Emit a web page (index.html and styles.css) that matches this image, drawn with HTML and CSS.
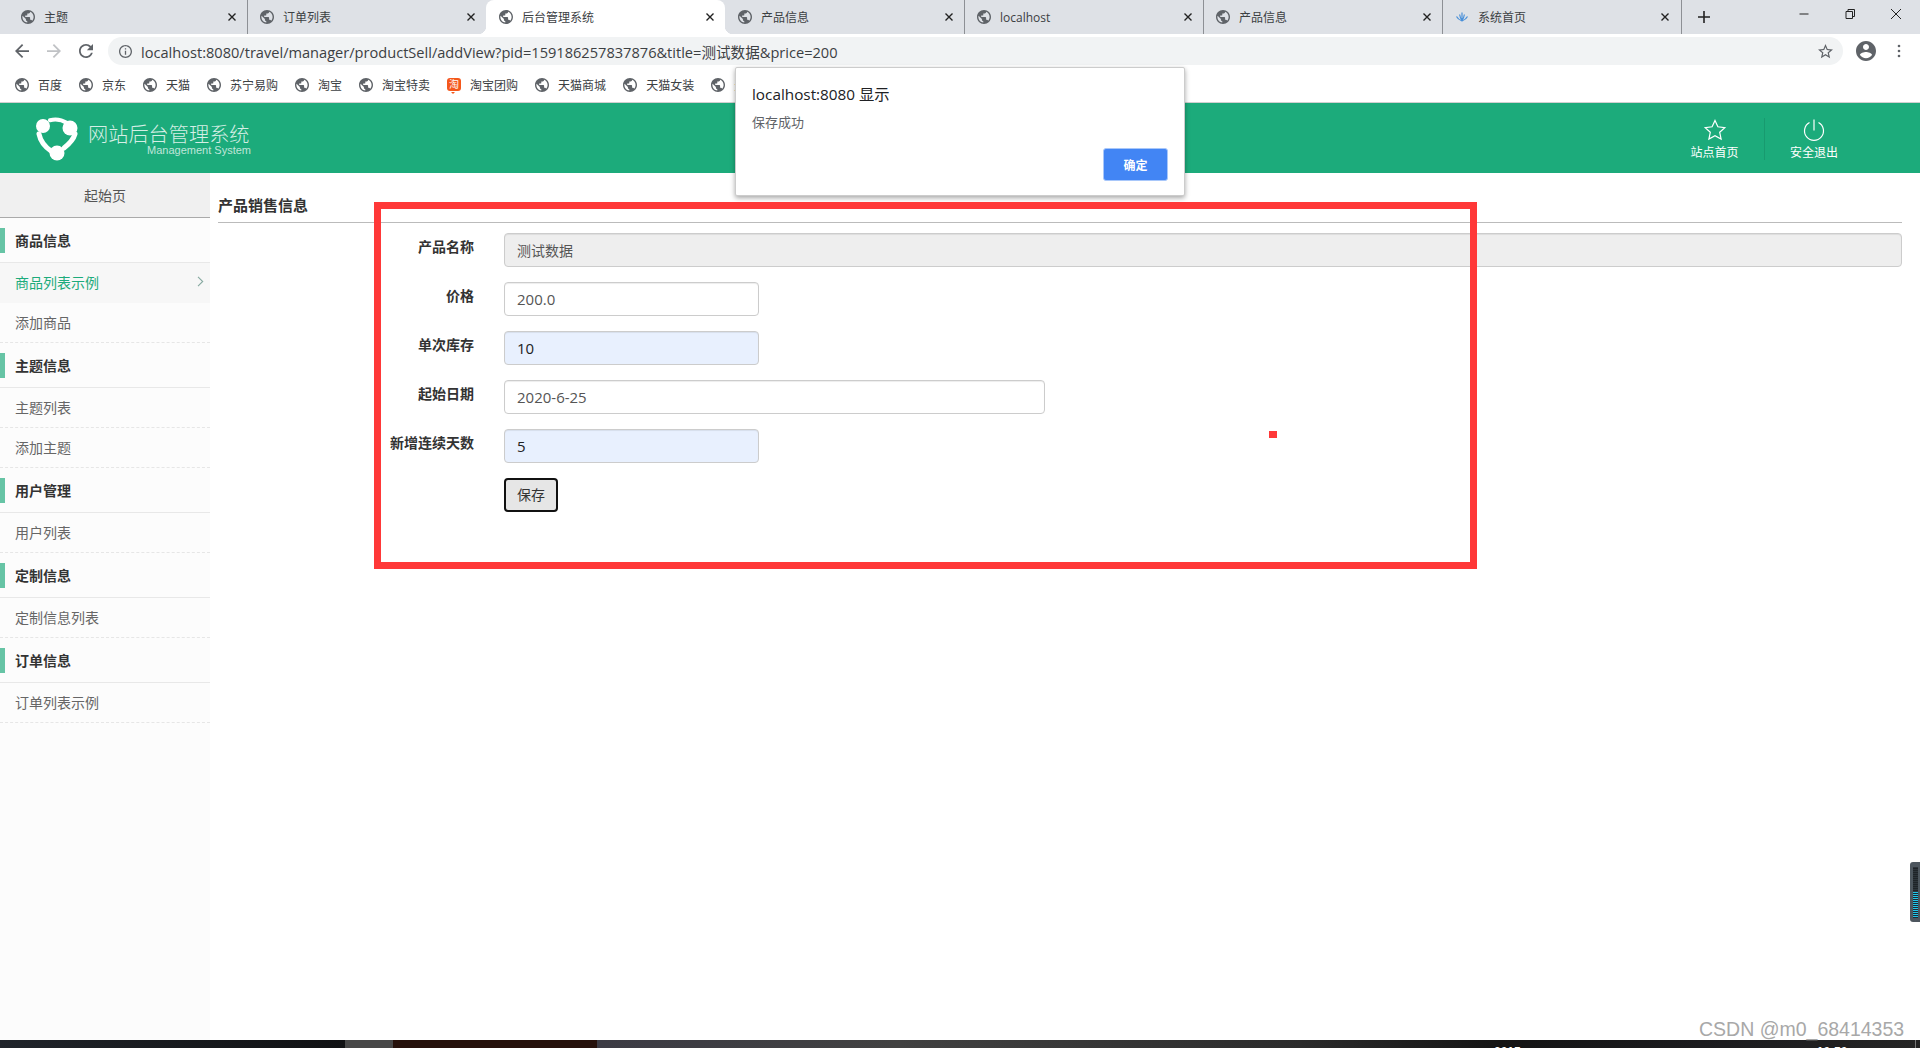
FILE: index.html
```html
<!DOCTYPE html>
<html lang="zh-CN">
<head>
<meta charset="utf-8">
<title>后台管理系统</title>
<link rel="stylesheet" href="styles.css">
</head>
<body>
<svg class="sprite" width="0" height="0" aria-hidden="true">
  <symbol id="globe" viewBox="2 2 20 20"><path d="M12 2C6.48 2 2 6.48 2 12s4.48 10 10 10 10-4.48 10-10S17.52 2 12 2zm-1 17.93c-3.95-.49-7-3.85-7-7.93 0-.62.08-1.21.21-1.79L9 15v1c0 1.1.9 2 2 2v1.93zm6.9-2.54c-.26-.81-1-1.39-1.9-1.39h-1v-3c0-.55-.45-1-1-1H8v-2h2c.55 0 1-.45 1-1V7h2c1.1 0 2-.9 2-2v-.41c2.93 1.19 5 4.06 5 7.41 0 2.08-.8 3.97-2.1 5.39z"/></symbol>
  <symbol id="close" viewBox="0 0 10 10"><path d="M1.5 1.5l7 7M8.5 1.5l-7 7" fill="none" stroke="currentColor" stroke-width="1.4"/></symbol>
  <symbol id="arrow" viewBox="4 4 16 16"><path d="M20 11H7.83l5.59-5.59L12 4l-8 8 8 8 1.41-1.41L7.83 13H20v-2z"/></symbol>
</svg>

<div class="tabstrip">
  <div class="tab tab-plain"><svg class="tab-icon"><use href="#globe"/></svg><span class="tab-title">主题</span><svg class="tab-close"><use href="#close"/></svg></div>
  <div class="tab"><svg class="tab-icon"><use href="#globe"/></svg><span class="tab-title">订单列表</span><svg class="tab-close"><use href="#close"/></svg></div>
  <div class="tab tab-plain tab-active"><svg class="tab-icon"><use href="#globe"/></svg><span class="tab-title">后台管理系统</span><svg class="tab-close"><use href="#close"/></svg></div>
  <div class="tab tab-plain"><svg class="tab-icon"><use href="#globe"/></svg><span class="tab-title">产品信息</span><svg class="tab-close"><use href="#close"/></svg></div>
  <div class="tab"><svg class="tab-icon"><use href="#globe"/></svg><span class="tab-title">localhost</span><svg class="tab-close"><use href="#close"/></svg></div>
  <div class="tab"><svg class="tab-icon"><use href="#globe"/></svg><span class="tab-title">产品信息</span><svg class="tab-close"><use href="#close"/></svg></div>
  <div class="tab tab-last">
    <svg class="tab-icon" viewBox="0 0 14 14"><path d="M7 2.5v8M7 10.5C5.5 8.5 5 7 4.6 4.5M7 10.5c1.5-2 2-3.500 2.400-6M7 11C4.500 10 2.500 8.500 1.500 6.500M7 11c2.500-1 4.500-2.500 5.500-4.500" fill="none" stroke="#4a90d9" stroke-width="1.200"/></svg>
    <span class="tab-title">系统首页</span><svg class="tab-close"><use href="#close"/></svg>
  </div>
  <svg class="new-tab" viewBox="0 0 12 12"><path d="M6 0v12M0 6h12" fill="none" stroke="#222" stroke-width="1.600"/></svg>
  <div class="win-controls">
    <svg class="win-btn" viewBox="0 0 12 12"><path d="M1.500 6h9" stroke="#222" fill="none"/></svg>
    <svg class="win-btn" viewBox="0 0 12 12"><path d="M2 3.500h6.500v7H2zM4 3.500V1.500h6.500v7H8.500" stroke="#222" fill="none"/></svg>
    <svg class="win-btn" viewBox="0 0 12 12"><path d="M1 1l10 10M11 1L1 11" stroke="#222" fill="none"/></svg>
  </div>
</div>

<div class="toolbar">
  <svg class="nav-icon"><use href="#arrow"/></svg>
  <svg class="nav-icon nav-disabled nav-flip"><use href="#arrow"/></svg>
  <svg class="nav-icon" viewBox="4 4 16 16"><path d="M17.650 6.350C16.200 4.900 14.210 4 12 4c-4.420 0-7.990 3.580-7.990 8s3.570 8 7.990 8c3.730 0 6.840-2.550 7.730-6h-2.080c-.82 2.330-3.040 4-5.650 4-3.310 0-6-2.690-6-6s2.690-6 6-6c1.660 0 3.140.69 4.220 1.780L13 11h7V4l-2.350 2.350z"/></svg>
  <div class="omnibox">
    <svg class="omni-info" viewBox="2 2 20 20"><path d="M11 7h2v2h-2zm0 4h2v6h-2zm1-9C6.480 2 2 6.480 2 12s4.480 10 10 10 10-4.480 10-10S17.520 2 12 2zm0 18c-4.410 0-8-3.590-8-8s3.590-8 8-8 8 3.590 8 8-3.590 8-8 8z"/></svg>
    <span class="omni-url">localhost:8080/travel/manager/productSell/addView?pid=159186257837876&amp;title=测试数据&amp;price=200</span>
    <svg class="omni-star" viewBox="2 2 20 20"><path d="M22 9.240l-7.190-.62L12 2 9.190 8.630 2 9.240l5.460 4.730L5.820 21 12 17.270 18.180 21l-1.630-7.030L22 9.240zM12 15.400l-3.760 2.270 1-4.280-3.320-2.880 4.380-.38L12 6.100l1.710 4.040 4.380.38-3.320 2.880 1 4.280L12 15.400z"/></svg>
  </div>
  <svg class="profile" viewBox="2 2 20 20"><path d="M12 2C6.480 2 2 6.480 2 12s4.480 10 10 10 10-4.480 10-10S17.520 2 12 2zm0 3c1.660 0 3 1.340 3 3s-1.340 3-3 3-3-1.340-3-3 1.340-3 3-3zm0 14.200c-2.500 0-4.710-1.280-6-3.220.03-1.990 4-3.080 6-3.080 1.990 0 5.970 1.090 6 3.080-1.290 1.940-3.500 3.220-6 3.220z"/></svg>
  <svg class="menu-dots" viewBox="0 0 4 14"><circle cx="2" cy="2" r="1.300"/><circle cx="2" cy="7" r="1.300"/><circle cx="2" cy="12" r="1.300"/></svg>
</div>

<div class="bookmarks">
  <div class="bm"><svg class="bm-icon"><use href="#globe"/></svg>百度</div>
  <div class="bm"><svg class="bm-icon"><use href="#globe"/></svg>京东</div>
  <div class="bm"><svg class="bm-icon"><use href="#globe"/></svg>天猫</div>
  <div class="bm"><svg class="bm-icon"><use href="#globe"/></svg>苏宁易购</div>
  <div class="bm"><svg class="bm-icon"><use href="#globe"/></svg>淘宝</div>
  <div class="bm"><svg class="bm-icon"><use href="#globe"/></svg>淘宝特卖</div>
  <div class="bm"><span class="bm-tao">淘</span>淘宝团购</div>
  <div class="bm"><svg class="bm-icon"><use href="#globe"/></svg>天猫商城</div>
  <div class="bm"><svg class="bm-icon"><use href="#globe"/></svg>天猫女装</div>
  <div class="bm"><svg class="bm-icon"><use href="#globe"/></svg>天猫超市</div>
</div>

<header class="site-header">
  <div class="brand">
    <svg class="brand-logo" viewBox="0 0 44 44">
      <g fill="none" stroke="#fff" stroke-linecap="round">
        <path d="M14 3.200Q23 1 31 6" stroke-width="4"/>
        <path d="M3 17Q5 27 15 34" stroke-width="5"/>
        <path d="M39 17Q37 24 28 31" stroke-width="5"/>
      </g>
      <g fill="#fff"><circle cx="7" cy="9" r="7"/><circle cx="34" cy="11" r="7.500"/><circle cx="21" cy="36" r="7.500"/></g>
    </svg>
    <div class="brand-text">
      <div class="brand-title">网站后台管理系统</div>
      <div class="brand-sub">Management System</div>
    </div>
  </div>
  <nav class="header-links">
    <a class="header-link">
      <svg class="header-icon" viewBox="0 0 24 24"><path d="M12 2.500l2.900 6.300 6.900.8-5.100 4.700 1.400 6.800-6.100-3.400-6.100 3.400 1.400-6.800-5.100-4.700 6.900-.8z" fill="none" stroke="#fff" stroke-width="1.200"/></svg>
      <span>站点首页</span>
    </a>
    <a class="header-link header-link-sep">
      <svg class="header-icon" viewBox="0 0 24 24"><path d="M12 1.500v11M7.500 4.500a9.500 9.500 0 1 0 9 0" fill="none" stroke="#fff" stroke-width="1.200"/></svg>
      <span>安全退出</span>
    </a>
  </nav>
</header>

<div class="workspace">
  <aside class="sidebar">
    <div class="side-start">起始页</div>
    <div class="side-head"><i class="side-bar"></i>商品信息</div>
    <div class="side-item side-item-active">商品列表示例<svg class="side-chevron" viewBox="0 0 7 11"><path d="M1 .8l4.700 4.700L1 10.200" fill="none" stroke="#86a9a0" stroke-width="1.100"/></svg></div>
    <div class="side-item">添加商品</div>
    <div class="side-head"><i class="side-bar"></i>主题信息</div>
    <div class="side-item">主题列表</div>
    <div class="side-item">添加主题</div>
    <div class="side-head"><i class="side-bar"></i>用户管理</div>
    <div class="side-item">用户列表</div>
    <div class="side-head"><i class="side-bar"></i>定制信息</div>
    <div class="side-item">定制信息列表</div>
    <div class="side-head"><i class="side-bar"></i>订单信息</div>
    <div class="side-item">订单列表示例</div>
  </aside>

  <main class="content">
    <h2 class="page-title">产品销售信息</h2>
    <form class="form">
      <label class="form-label">产品名称</label>
      <input class="field field-disabled" type="text" value="测试数据" disabled>
      <label class="form-label">价格</label>
      <input class="field field-sm" type="text" value="200.0">
      <label class="form-label">单次库存</label>
      <input class="field field-sm field-auto" type="text" value="10">
      <label class="form-label">起始日期</label>
      <input class="field field-md" type="text" value="2020-6-25">
      <label class="form-label">新增连续天数</label>
      <input class="field field-sm field-auto" type="text" value="5">
      <span></span>
      <button class="save-btn" type="button">保存</button>
    </form>
  </main>
</div>

<footer class="taskbar"><span class="task-year">2015</span><span class="task-time">10:50</span></footer>

<div class="alert-dialog">
  <div class="alert-title">localhost:8080 显示</div>
  <div class="alert-msg">保存成功</div>
  <div class="alert-actions"><button class="alert-ok" type="button">确定</button></div>
</div>
<div class="mark-box"></div>
<div class="mark-dot"></div>
<div class="volume"><div class="volume-track"></div></div>
<div class="watermark">CSDN @m0_68414353</div>
</body>
</html>
```
FILE: styles.css
```css
* { box-sizing: border-box; }
html, body { margin: 0; padding: 0; }
body {
  position: relative;
  width: 1920px;
  height: 1048px;
  overflow: hidden;
  display: flex;
  flex-direction: column;
  background: #fff;
  color: #333;
  font-family: "Open Sans", "Noto Sans CJK SC", sans-serif;
  font-size: 14px;
}
.sprite { position: absolute; }
svg { flex: none; display: block; }

/* tab strip */
.tabstrip {
  flex: none;
  height: 34px;
  display: flex;
  padding-left: 8px;
  background: #dee1e6;
  color: #3c4043;
  font-size: 12px;
}
.tab {
  position: relative;
  flex: none;
  width: 239px;
  display: flex;
  align-items: center;
  padding: 0 10px 0 12px;
  border-left: 1px solid #8d9095;
  background-clip: padding-box;
}
.tab-plain { border-left-color: transparent; }
.tab-last { width: 240px; padding-right: 11px; border-right: 1px solid #8d9095; }
.tab-active {
  background: #fff;
  background-clip: border-box;
  border-radius: 8px 8px 0 0;
}
.tab-active::before, .tab-active::after {
  content: "";
  position: absolute;
  bottom: 0;
  width: 8px;
  height: 8px;
}
.tab-active::before { left: -9px; background: radial-gradient(circle at 0 0, transparent 8px, #fff 8.500px); }
.tab-active::after { right: -8px; background: radial-gradient(circle at 100% 0, transparent 8px, #fff 8.500px); }
.tab-icon { width: 14px; height: 14px; fill: #5f6368; margin-right: 9px; }
.tab-title { flex: 1; white-space: nowrap; }
.tab-close { width: 10px; height: 10px; color: #222; }
.new-tab { width: 12px; height: 12px; margin: 11px 0 0 16px; }
.win-controls { display: flex; gap: 34px; margin: 8px 18px 0 auto; }
.win-btn { width: 12px; height: 12px; }

/* toolbar */
.toolbar {
  flex: none;
  height: 34px;
  display: flex;
  align-items: center;
  padding: 0 0 0 15px;
  background: #fff;
}
.nav-icon { width: 14px; height: 14px; margin-right: 18px; fill: #5f6368; }
.nav-disabled { fill: #c0c2c5; }
.nav-flip { transform: scaleX(-1); }
.omnibox {
  flex: none;
  width: 1735px;
  height: 28px;
  margin-left: -3px;
  display: flex;
  align-items: center;
  padding: 0 10px 0 11px;
  border-radius: 14px;
  background: #f1f3f4;
}
.omni-info { width: 13px; height: 13px; fill: #5f6368; margin-right: 9px; }
.omni-url { flex: 1; font-size: 14.600px; color: #3c4043; white-space: nowrap; }
.omni-star { width: 15px; height: 15px; fill: #5f6368; }
.profile { width: 20px; height: 20px; fill: #5f6368; margin-left: 13px; }
.menu-dots { width: 4px; height: 14px; fill: #5f6368; margin-left: 21px; }

/* bookmarks */
.bookmarks {
  flex: none;
  height: 35px;
  display: flex;
  align-items: center;
  padding-left: 15px;
  background: #fff;
  border-bottom: 1px solid #d0d0d0;
  color: #3c4043;
  font-size: 12px;
}
.bm { flex: none; display: flex; align-items: center; margin-right: 17px; white-space: nowrap; }
.bm-icon { width: 14px; height: 14px; fill: #5f6368; margin-right: 9px; }
.bm-tao {
  position: relative;
  flex: none;
  width: 14px;
  height: 13px;
  margin: -2px 9px 0 0;
  border-radius: 3px;
  background: #f4581c;
  color: #fff;
  font-size: 10px;
  line-height: 13px;
  text-align: center;
}
.bm-tao::after {
  content: "";
  position: absolute;
  left: 4px;
  bottom: -3px;
  border: 2px solid transparent;
  border-top-color: #f4581c;
  border-bottom-width: 0;
}

/* site header */
.site-header {
  flex: none;
  height: 70px;
  display: flex;
  align-items: center;
  justify-content: space-between;
  padding-left: 36px;
  background: #1cab7b;
  color: #fff;
}
.brand { display: flex; align-items: center; gap: 8px; }
.brand-logo { width: 44px; height: 44px; margin-top: 1px; }
.brand-text { display: flex; flex-direction: column; width: 163px; margin-top: 1px; }
.brand-title { font-size: 20.200px; line-height: 26px; color: rgba(255,255,255,.82); font-weight: 300; white-space: nowrap; }
.brand-sub { font-family: "Liberation Sans", sans-serif; font-size: 11px; line-height: 12px; margin-top: -3px; text-align: right; color: rgba(255,255,255,.72); white-space: nowrap; }
.header-links { display: flex; align-items: center; padding-right: 57px; }
.header-link { width: 99px; height: 42px; display: flex; flex-direction: column; align-items: center; font-size: 12px; line-height: 16px; margin-top: 2px; }
.header-link-sep { border-left: 1px solid #189a6f; }
.header-link span { margin-top: 3px; white-space: nowrap; }
.header-icon { width: 24px; height: 24px; }

/* workspace */
.workspace { flex: 1; min-height: 0; display: flex; }
.sidebar { flex: none; width: 210px; background: #fcfcfc; }
.side-start {
  height: 45px;
  display: flex;
  align-items: center;
  justify-content: center;
  background: #f0f0f0;
  border-bottom: 1px solid #aaa;
  color: #555;
}
.side-head {
  height: 45px;
  display: flex;
  align-items: center;
  border-bottom: 1px solid #e8e8e8;
  font-weight: 700;
  color: #333;
}
.side-bar { flex: none; width: 5px; height: 25px; margin-right: 10px; background: #66c4a5; }
.side-item {
  height: 40px;
  display: flex;
  align-items: center;
  justify-content: space-between;
  padding: 0 6px 2px 15px;
  border-bottom: 1px dashed #e6e6e6;
  color: #666;
}
.side-item-active { background: #f7f7f7; color: #1cab7b; border-bottom-color: transparent; }
.side-chevron { width: 7px; height: 11px; }

/* content */
.content { flex: 1; min-width: 0; padding: 20px 18px 0 8px; }
.page-title {
  margin: 0;
  height: 30px;
  padding-bottom: 5px;
  border-bottom: 1px solid #bbb;
  font-size: 15px;
  line-height: 24px;
  font-weight: 700;
  color: #333;
}
.form {
  display: grid;
  grid-template-columns: 256px 1fr;
  column-gap: 30px;
  row-gap: 15px;
  padding-top: 10px;
  align-items: start;
}
.form-label { font-weight: 700; font-size: 14px; line-height: 20px; padding-top: 4px; text-align: right; color: #333; white-space: nowrap; }
.field {
  height: 34px;
  padding: 0 12px;
  border: 1px solid #ccc;
  border-radius: 4px;
  background: #fff;
  color: #555;
  font: inherit;
  font-size: 15px;
  box-shadow: inset 0 1px 1px rgba(0,0,0,.075);
}
.field-disabled { width: 100%; background: #eee; color: #555; font-size: 14px; opacity: 1; }
.field-sm { width: 255px; }
.field-md { width: 541px; }
.field-auto { background: #e8f0fe; color: #222; }
.save-btn {
  width: 54px;
  height: 34px;
  padding: 0 0 2px;
  border: 2px solid #111;
  border-radius: 4px;
  background: #e6e6e6;
  color: #333;
  font: inherit;
  font-size: 14px;
}

/* taskbar */
.taskbar {
  flex: none;
  height: 8px;
  display: flex;
  overflow: hidden;
  padding-top: 6px;
  color: #fff;
  font-family: "Liberation Sans", sans-serif;
  font-size: 12px;
  font-weight: 700;
  line-height: 12px;
  background: linear-gradient(90deg, #20242a 0, #101113 345px, #474747 345px, #474747 393px, #26110b 393px, #26110b 597px, #3c3b44 597px, #414141 900px, #2b2b2b 1300px, #141414 1500px, #1b1b1e 1700px, #242424 1915px, #777 1915px, #777 1916px, #222 1916px);
}
.task-year { margin-left: 1494px; }
.task-time { margin-left: 296px; }

/* overlays */
.alert-dialog {
  position: absolute;
  left: 735px;
  top: 67px;
  width: 450px;
  height: 129px;
  display: flex;
  flex-direction: column;
  padding: 15px 16px 14px 16px;
  background: #fff;
  border: 1px solid #ccc;
  border-radius: 2px;
  box-shadow: 0 2px 5px rgba(0,0,0,.35);
}
.alert-title { font-size: 15.300px; line-height: 22px; color: #202124; }
.alert-msg { margin-top: 8px; font-size: 13px; line-height: 18px; color: #5f6368; }
.alert-actions { margin-top: auto; display: flex; justify-content: flex-end; }
.alert-ok {
  width: 65px;
  height: 33px;
  border: 1px solid #a8c7fa;
  border-radius: 3px;
  background: #4285f4;
  color: #fff;
  font: inherit;
  font-size: 12px;
  font-weight: 700;
}
.mark-box {
  position: absolute;
  left: 374px;
  top: 202px;
  width: 1103px;
  height: 367px;
  border: 7px solid #ff3838;
}
.mark-dot { position: absolute; left: 1269px; top: 431px; width: 8px; height: 7px; background: #ff3838; }
.volume {
  position: absolute;
  left: 1910px;
  top: 862px;
  width: 10px;
  height: 60px;
  padding: 5px 2px 4px 3px;
  background: #4d565e;
  border-radius: 3px 0 0 3px;
}
.volume-track {
  height: 100%;
  background:
    repeating-linear-gradient(180deg, #22c6e8 0 1px, #1b2a33 1px 2px) bottom / 100% 26px no-repeat,
    repeating-linear-gradient(180deg, #2d343a 0 1px, #1e2328 1px 2px);
}
.watermark {
  position: absolute;
  left: 1699px;
  top: 1017px;
  font-family: "Liberation Sans", sans-serif;
  font-size: 19.500px;
  line-height: 24px;
  color: #a8a8a8;
  white-space: nowrap;
}
```
